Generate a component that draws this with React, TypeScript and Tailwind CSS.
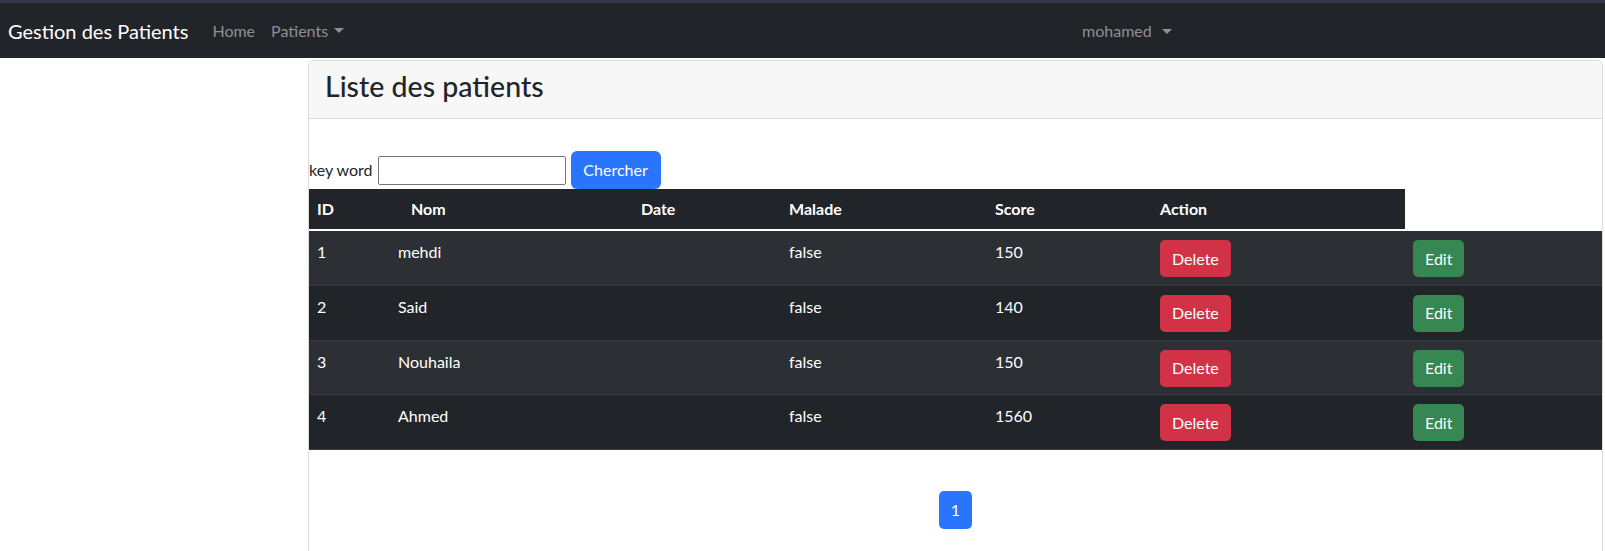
import React from 'react';

type Patient = { id: number; nom: string; malade: boolean; score: number };

const PATIENTS: Patient[] = [
  { id: 1, nom: 'mehdi', malade: false, score: 150 },
  { id: 2, nom: 'Said', malade: false, score: 140 },
  { id: 3, nom: 'Nouhaila', malade: false, score: 150 },
  { id: 4, nom: 'Ahmed', malade: false, score: 1560 },
];

function Caret() {
  return (
    <span className="ml-[6px] inline-block h-0 w-0 border-x-[5px] border-t-[5px] border-x-transparent border-t-current align-[3px]" />
  );
}

function Navbar() {
  return (
    <nav className="border-t-[3px] border-[#34344a] bg-[#212529]">
      <div className="flex h-[55px] items-center">
        <span className="ml-[8px] text-[20px] text-white">Gestion des Patients</span>
        <div className="ml-[24px] flex items-center gap-[16px] text-[16px] text-[#8e9094]">
          <span>Home</span>
          <span className="flex items-center">
            Patients
            <Caret />
          </span>
        </div>
        <span className="ml-[738px] flex items-center text-[16px] text-[#8e9094]">
          mohamed
          <span className="ml-[4px]">
            <Caret />
          </span>
        </span>
      </div>
    </nav>
  );
}

function PatientTable() {
  return (
    <div className="text-[16px] text-white">
      <div className="flex h-[40px] w-[1096px] items-center bg-[#212529] font-bold">
        <div className="w-[94px] px-[8px]">ID</div>
        <div className="w-[230px] px-[8px]">Nom</div>
        <div className="w-[148px] px-[8px]">Date</div>
        <div className="w-[206px] px-[8px]">Malade</div>
        <div className="w-[165px] px-[8px]">Score</div>
        <div className="w-[253px] px-[8px]">Action</div>
      </div>
      <div className="mt-[2px]">
        {PATIENTS.map((p, i) => (
          <div
            key={p.id}
            className={`flex h-[54.75px] border-b border-[#373b3e] ${i % 2 === 0 ? 'bg-[#2c3034]' : 'bg-[#212529]'}`}
          >
            <div className="w-[81px] px-[8px] pt-[9px]">{p.id}</div>
            <div className="w-[200px] px-[8px] pt-[9px]">{p.nom}</div>
            <div className="w-[191px] px-[8px] pt-[9px]"></div>
            <div className="w-[206px] px-[8px] pt-[9px]">{String(p.malade)}</div>
            <div className="w-[165px] px-[8px] pt-[9px]">{p.score}</div>
            <div className="w-[253px] px-[8px] pt-[9px]">
              <button className="h-[37px] rounded-[5px] bg-[#d13246] px-[12px] text-white">Delete</button>
            </div>
            <div className="flex-1 px-[8px] pt-[9px]">
              <button className="h-[37px] rounded-[5px] bg-[#378753] px-[12px] text-white">Edit</button>
            </div>
          </div>
        ))}
      </div>
    </div>
  );
}

export default function App() {
  return (
    <div className="min-h-[551px] bg-white font-['Segoe_UI','Lato','Noto_Sans',sans-serif] text-[#212529]">
      <Navbar />
      <div className="flex pt-[2px]">
        <div className="w-[308px] shrink-0" />
        <div className="mr-[2px] min-h-[491px] flex-1 rounded-t-[6px] border border-b-0 border-[#dcdcdc]">
          <div className="h-[58px] rounded-t-[5px] border-b border-[#dcdcdc] bg-[#f7f7f7] px-[16px] pt-[8px]">
            <h3 className="text-[28.5px] font-medium leading-[1.2]">Liste des patients</h3>
          </div>
          <div className="pt-[32px]">
            <form className="flex h-[38px] items-center" onSubmit={(e) => e.preventDefault()}>
              <label className="text-[16px]">key word</label>
              <input className="ml-[5px] h-[29px] w-[188px] rounded-[2px] border border-[#767676] bg-white px-[2px]" />
              <button className="ml-[5px] h-[38px] w-[90px] rounded-[6px] bg-[#2a75fd] text-[16px] text-white">
                Chercher
              </button>
            </form>
            <PatientTable />
            <div className="mt-[41px] flex justify-center">
              <button className="h-[38px] w-[33px] rounded-[5px] bg-[#2a75fd] text-[16px] text-white">1</button>
            </div>
          </div>
        </div>
      </div>
    </div>
  );
}
